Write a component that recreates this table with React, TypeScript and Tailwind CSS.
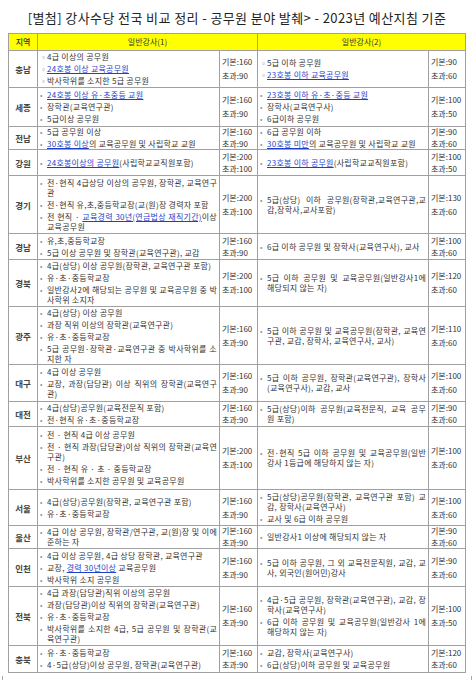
import React from 'react';

type Row = {
  r: string;
  h: number;
  b?: string;
  c1: string[];
  p1: [string, string];
  c2: string[];
  p2: [string, string];
};

const rows: Row[] = [
  { r: '충남', h: 36, b: '◦', c1: ['4급 이상의 공무원', '{24호봉 이상 교육공무원}', '박사학위를 소지한 5급 공무원'], p1: ['160', '90'], c2: ['5급 이하 공무원', '{23호봉 이하 교육공무원}'], p2: ['90', '60'] },
  { r: '세종', h: 38, c1: ['{24호봉 이상 유·초중등 교원}', '장학관(교육연구관)', '5급이상 공무원'], p1: ['160', '90'], c2: ['{23호봉 이하 유·초·중등 교원}', '장학사(교육연구사)', '6급이하 공무원'], p2: ['100', '50'] },
  { r: '전남', h: 22, c1: ['5급 공무원 이상', '{30호봉 이상}의 교육공무원 및 사립학교 교원'], p1: ['160', '90'], c2: ['6급 공무원 이하', '{30호봉 미만}의 교육공무원 및 사립학교 교원'], p2: ['90', '60'] },
  { r: '강원', h: 25, c1: ['{24호봉이상의 공무원}(사립학교교직원포함)'], p1: ['200', '100'], c2: ['{23호봉 이하 공무원}(사립학교교직원포함)'], p2: ['100', '50'] },
  { r: '경기', h: 57, c1: ['전·현직 4급상당 이상의 공무원, 장학관, 교육연구관', '전·현직 유,초,중등학교장(교(원)장 경력자 포함', '전 현직 · {교육경력 30년(연금법상 재직기간)}이상 교육공무원'], p1: ['200', '100'], c2: ['5급(상당) 이하 공무원(장학관,교육연구관,교감,장학사,교사포함)'], p2: ['130', '60'] },
  { r: '경남', h: 25, c1: ['유,초,중등학교장', '5급 이상 공무원 및 장학관(교육연구관), 교감'], p1: ['160', '90'], c2: ['6급 이하 공무원 및 장학사(교육연구사), 교사'], p2: ['100', '60'] },
  { r: '경북', h: 46, c1: ['4급(상당) 이상 공무원(장학관, 교육연구관 포함)', '유·초·중등학교장', '일반강사2에 해당되는 공무원 및 교육공무원 중 박사학위 소지자'], p1: ['200', '100'], c2: ['5급 이하 공무원 및 교육공무원(일반강사1에 해당되지 않는 자)'], p2: ['120', '60'] },
  { r: '광주', h: 57, c1: ['4급(상당) 이상 공무원', '과장 직위 이상의 장학관(교육연구관)', '유·초·중등학교장', '5급 공무원·장학관·교육연구관 중 박사학위를 소지한 자'], p1: ['160', '90'], c2: ['5급 이하 공무원 및 교육공무원(장학관, 교육연구관, 교감, 장학사, 교육연구사, 교사)'], p2: ['110', '60'] },
  { r: '대구', h: 36, c1: ['4급 이상 공무원', '교장, 과장(담당관) 이상 직위의 장학관(교육연구관)'], p1: ['160', '90'], c2: ['5급 이하 공무원, 장학관(교육연구관), 장학사(교육연구사), 교감, 교사'], p2: ['100', '60'] },
  { r: '대전', h: 24, c1: ['4급(상당)공무원(교육전문직 포함)', '전·현직 유·초·중등학교장'], p1: ['160', '90'], c2: ['5급(상당)이하 공무원(교육전문직, 교육 공무원 포함)'], p2: ['90', '60'] },
  { r: '부산', h: 62, c1: ['전 · 현직 4급 이상 공무원', '전 · 현직 과장(담당관)이상 직위의 장학관(교육연구관)', '전 · 현직 유 · 초 · 중등학교장', '박사학위를 소지한 공무원 및 교육공무원'], p1: ['200', '100'], c2: ['전·현직 5급 이하 공무원 및 교육공무원(일반강사 1등급에 해당하지 않는 자)'], p2: ['100', '60'] },
  { r: '서울', h: 35, c1: ['4급(상당)공무원(장학관, 교육연구관 포함)', '유·초·중등학교장'], p1: ['160', '90'], c2: ['5급(상당)공무원(장학관, 교육연구관 포함) 교감, 장학사(교육연구사)', '교사 및 6급 이하 공무원'], p2: ['100', '60'] },
  { r: '울산', h: 22, c1: ['4급 이상 공무원, 장학관/연구관, 교(원)장 및 이에 준하는 자'], p1: ['160', '90'], c2: ['일반강사1 이상에 해당되지 않는 자'], p2: ['90', '60'] },
  { r: '인천', h: 37, c1: ['4급 이상 공무원, 4급 상당 장학관, 교육연구관', '교장, {경력 30년이상} 교육공무원', '박사학위 소지 공무원'], p1: ['160', '90'], c2: ['5급 이하 공무원, 그 외 교육전문직원, 교감, 교사, 외국인(원어민)강사'], p2: ['90', '60'] },
  { r: '전북', h: 58, c1: ['4급 과장(담당관)직위 이상의 공무원', '과장(담당관)이상 직위의 장학관(교육연구관)', '유·초·중등학교장', '박사학위를 소지한 4급, 5급 공무원 및 장학관(교육연구관)'], p1: ['160', '90'], c2: ['4급·5급 공무원, 장학관(교육연구관), 교감, 장학사(교육연구사)', '6급 이하 공무원 및 교육공무원(일반강사 1에 해당하지 않는 자)'], p2: ['100', '50'] },
  { r: '충북', h: 26, c1: ['유·초·중등학교장', '4·5급(상당)이상 공무원, 장학관(교육연구관)'], p1: ['160', '90'], c2: ['교감, 장학사(교육연구사)', '6급(상당)이하 공무원 및 교육공무원'], p2: ['120', '60'] },
];

function Rich({ s }: { s: string }) {
  const parts = s.split(/(\{[^}]+\})/);
  return (
    <>
      {parts.map((p, i) =>
        p.startsWith('{') ? (
          <span key={i} className="text-[#1f3fc8] underline underline-offset-[1px]">
            {p.slice(1, -1)}
          </span>
        ) : (
          <span key={i}>{p}</span>
        )
      )}
    </>
  );
}

function Items({ items, b }: { items: string[]; b?: string }) {
  return (
    <div className="flex flex-col justify-center gap-[2px] bg-white pl-[2px] pr-[2px]">
      {items.map((s, i) => (
        <div key={i} className="flex">
          {b ? (
            <span className="w-[7px] shrink-0 text-[7px] leading-[10px] text-[#6a7a9a]">{b}</span>
          ) : (
            <span className="w-[7px] shrink-0 text-[7px] leading-[10px] text-[#8a94a8]">•</span>
          )}
          <span className="min-w-0 flex-1 text-justify tracking-[0.25px]">
            <Rich s={s} />
          </span>
        </div>
      ))}
    </div>
  );
}

function Pay({ p, tall }: { p: [string, string]; tall: boolean }) {
  return (
    <div className={tall ? 'flex flex-col justify-center gap-[4px] bg-white pl-[2px]' : 'flex flex-col justify-center gap-[2px] bg-white pl-[2px]'}>
      <span>기본:{p[0]}</span>
      <span>초과:{p[1]}</span>
    </div>
  );
}

export default function App() {
  return (
    <div
      className="w-[474px] h-[680px] bg-white overflow-hidden text-[#333]"
      style={{ fontFamily: '"Noto Sans CJK KR", "Noto Sans", sans-serif' }}
    >
      <div className="pt-[9px] h-[33px] text-center text-[13px] leading-[17px] text-[#222] tracking-[0.4px]">
        [별첨] 강사수당 전국 비교 정리 - 공무원 분야 발췌&gt; - 2023년 예산지침 기준
      </div>
      <div className="ml-[8px] w-fit grid grid-cols-[28px_181px_37px_170px_36px] gap-px bg-[#a0a0a0] p-px text-[8px] leading-[10px]">
        <div className="h-[16px] bg-[#ffff00] flex items-center justify-center font-medium">지역</div>
        <div className="col-span-2 bg-[#ffff00] flex items-center justify-center">일반강사(1)</div>
        <div className="col-span-2 bg-[#ffff00] flex items-center justify-center">일반강사(2)</div>
        {rows.map((row) => (
          <React.Fragment key={row.r}>
            <div
              className="bg-white flex items-center justify-center font-semibold text-[8.5px] text-[#444]"
              style={{ height: row.h }}
            >
              {row.r}
            </div>
            <Items items={row.c1} b={row.b} />
            <Pay p={row.p1} tall={row.h > 30} />
            <Items items={row.c2} b={row.b} />
            <Pay p={row.p2} tall={row.h > 30} />
          </React.Fragment>
        ))}
      </div>
      <div className="mx-[2px] mt-[3px] h-[6px] border-l border-r border-[#aaa]" />
    </div>
  );
}
